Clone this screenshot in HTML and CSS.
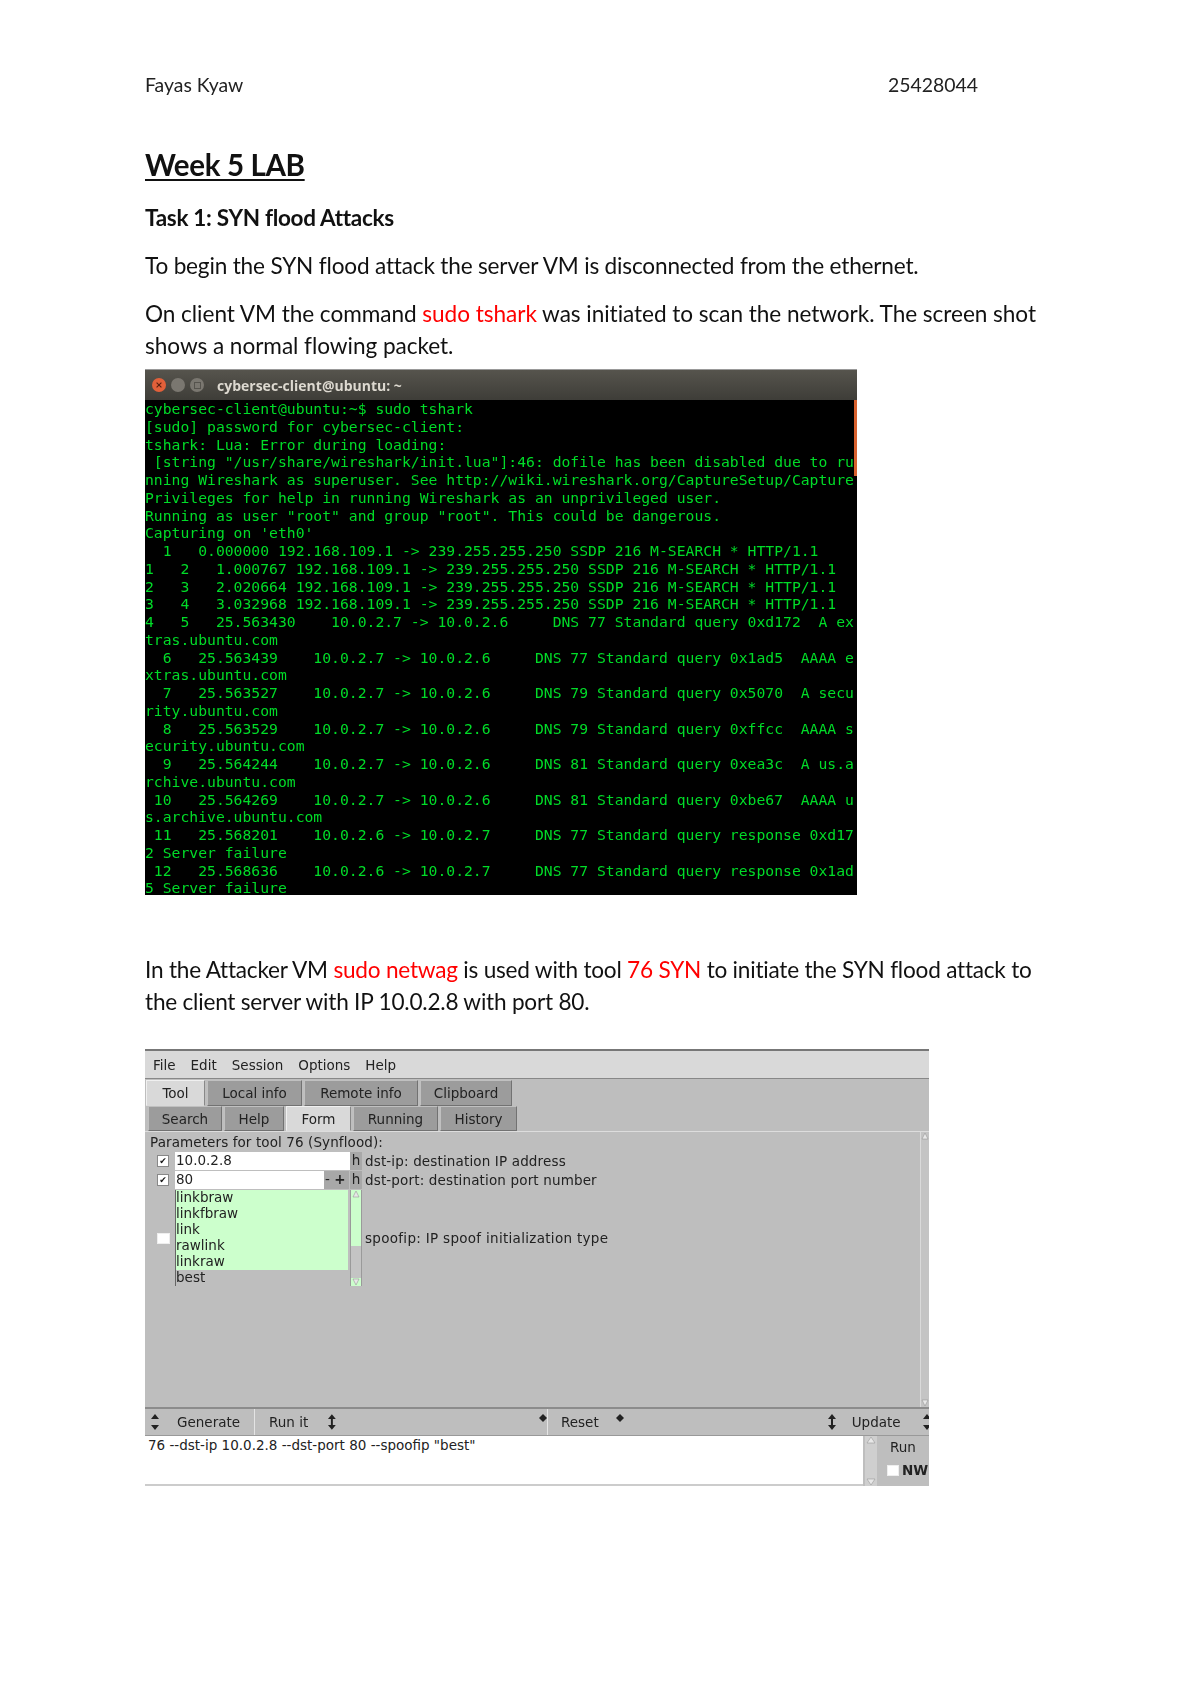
FILE: index.html
```html
<!DOCTYPE html>
<html lang="en">
<head>
<meta charset="utf-8">
<title>Week 5 LAB</title>
<link rel="stylesheet" href="styles.css">
</head>
<body>
<main class="page">
  <header class="head"><span>Fayas Kyaw</span><span>25428044</span></header>
  <h1 class="title">Week 5 LAB</h1>
  <h2 class="task">Task 1: SYN flood Attacks</h2>
  <p class="para p1">To begin the SYN flood attack the server VM is disconnected from the ethernet.</p>
  <p class="para p2">On client VM the command <span class="red">sudo tshark</span> was initiated to scan the network. The screen shot shows a normal flowing packet.</p>

  <section class="term">
    <div class="term-bar">
      <span class="dot close"><svg viewBox="0 0 10 10" width="8" height="8"><path d="M2 2l6 6M8 2l-6 6" stroke="#5a2010" stroke-width="1.4"/></svg></span>
      <span class="dot"></span>
      <span class="dot"><span class="dot-inner"></span></span>
      <span class="term-title">cybersec-client@ubuntu: ~</span>
    </div>
    <div class="term-body">
      <pre class="term-text">cybersec-client@ubuntu:~$ sudo tshark
[sudo] password for cybersec-client:
tshark: Lua: Error during loading:
 [string "/usr/share/wireshark/init.lua"]:46: dofile has been disabled due to ru
nning Wireshark as superuser. See http://wiki.wireshark.org/CaptureSetup/Capture
Privileges for help in running Wireshark as an unprivileged user.
Running as user "root" and group "root". This could be dangerous.
Capturing on 'eth0'
  1   0.000000 192.168.109.1 -> 239.255.255.250 SSDP 216 M-SEARCH * HTTP/1.1
1   2   1.000767 192.168.109.1 -> 239.255.255.250 SSDP 216 M-SEARCH * HTTP/1.1
2   3   2.020664 192.168.109.1 -> 239.255.255.250 SSDP 216 M-SEARCH * HTTP/1.1
3   4   3.032968 192.168.109.1 -> 239.255.255.250 SSDP 216 M-SEARCH * HTTP/1.1
4   5   25.563430    10.0.2.7 -> 10.0.2.6     DNS 77 Standard query 0xd172  A ex
tras.ubuntu.com
  6   25.563439    10.0.2.7 -> 10.0.2.6     DNS 77 Standard query 0x1ad5  AAAA e
xtras.ubuntu.com
  7   25.563527    10.0.2.7 -> 10.0.2.6     DNS 79 Standard query 0x5070  A secu
rity.ubuntu.com
  8   25.563529    10.0.2.7 -> 10.0.2.6     DNS 79 Standard query 0xffcc  AAAA s
ecurity.ubuntu.com
  9   25.564244    10.0.2.7 -> 10.0.2.6     DNS 81 Standard query 0xea3c  A us.a
rchive.ubuntu.com
 10   25.564269    10.0.2.7 -> 10.0.2.6     DNS 81 Standard query 0xbe67  AAAA u
s.archive.ubuntu.com
 11   25.568201    10.0.2.6 -> 10.0.2.7     DNS 77 Standard query response 0xd17
2 Server failure
 12   25.568636    10.0.2.6 -> 10.0.2.7     DNS 77 Standard query response 0x1ad
5 Server failure</pre>
      <div class="term-scroll"></div>
    </div>
  </section>

  <p class="para p3">In the Attacker VM <span class="red">sudo netwag</span> is used with tool <span class="red">76 SYN</span> to initiate the SYN flood attack to the client server with IP 10.0.2.8 with port 80.</p>

  <section class="tool">
    <nav class="menu"><span>File</span><span>Edit</span><span>Session</span><span>Options</span><span>Help</span></nav>
    <div class="tabs tabs-a">
      <span class="tab on w-tool">Tool</span>
      <span class="tab w-local">Local info</span>
      <span class="tab w-remote">Remote info</span>
      <span class="tab w-clip">Clipboard</span>
    </div>
    <div class="tabs tabs-b">
      <span class="tab w-search">Search</span>
      <span class="tab w-help">Help</span>
      <span class="tab on w-form">Form</span>
      <span class="tab w-run">Running</span>
      <span class="tab w-hist">History</span>
    </div>
    <div class="panel">
      <div class="params">
        <div class="params-label">Parameters for tool 76 (Synflood):</div>
        <div class="row">
          <span class="check"><span class="box">✔</span></span>
          <span class="input w-long">10.0.2.8</span>
          <span class="mini">h</span>
          <span class="desc">dst-ip: destination IP address</span>
        </div>
        <div class="row">
          <span class="check"><span class="box">✔</span></span>
          <span class="input w-short">80</span>
          <span class="mini narrow">-</span>
          <span class="mini plus">+</span>
          <span class="mini">h</span>
          <span class="desc">dst-port: destination port number</span>
        </div>
        <div class="row-list">
          <span class="check"><span class="box big"></span></span>
          <div class="list">
            <div class="item">linkbraw</div>
            <div class="item">linkfbraw</div>
            <div class="item">link</div>
            <div class="item">rawlink</div>
            <div class="item">linkraw</div>
            <div class="item sel">best</div>
          </div>
          <div class="list-scroll">
            <svg class="sb-arrow" viewBox="0 0 10 8" width="10" height="8"><path d="M5 1l3 6H2z" fill="#e8e8e8" stroke="#999" stroke-width=".6"/></svg>
            <span class="thumb"></span>
            <svg class="sb-arrow" viewBox="0 0 10 8" width="10" height="8"><path d="M5 7l3-6H2z" fill="#e8e8e8" stroke="#999" stroke-width=".6"/></svg>
          </div>
          <span class="desc spoof">spoofip: IP spoof initialization type</span>
        </div>
      </div>
      <div class="vscroll">
        <svg viewBox="0 0 8 8" width="8" height="8"><path d="M4 1l3 6H1z" fill="#e8e8e8" stroke="#999" stroke-width=".6"/></svg>
        <svg viewBox="0 0 8 8" width="8" height="8"><path d="M4 7l3-6H1z" fill="#e8e8e8" stroke="#999" stroke-width=".6"/></svg>
      </div>
    </div>
    <div class="actions">
      <div class="act act-gen">
        <svg class="arrows" viewBox="0 0 10 18" width="10" height="18"><path d="M5 1l4 5H1zM5 17l4-5H1z" fill="#222"/></svg>
        <span>Generate</span>
      </div>
      <div class="act act-run">
        <span>Run it</span>
        <svg class="arrows" viewBox="0 0 10 18" width="10" height="18"><path d="M5 1l4 5H1zM5 17l4-5H1z" fill="#222"/><path d="M4 5h2v8H4z" fill="#222"/></svg>
        <svg class="dia dia-a" viewBox="0 0 8 8" width="8" height="8"><path d="M4 0l4 4-4 4-4-4z" fill="#222"/></svg>
      </div>
      <div class="act act-reset">
        <span>Reset</span>
        <svg class="dia" viewBox="0 0 8 8" width="8" height="8"><path d="M4 0l4 4-4 4-4-4z" fill="#222"/></svg>
        <svg class="arrows arrows-r" viewBox="0 0 10 18" width="10" height="18"><path d="M5 1l4 5H1zM5 17l4-5H1z" fill="#222"/><path d="M4 5h2v8H4z" fill="#222"/></svg>
        <span class="upd">Update</span>
        <svg class="arrows arrows-e" viewBox="0 0 10 18" width="10" height="18"><path d="M5 1l4 5H1zM5 17l4-5H1z" fill="#222"/></svg>
      </div>
    </div>
    <div class="cmd">
      <div class="cmd-text">76 --dst-ip 10.0.2.8 --dst-port 80 --spoofip "best"</div>
      <div class="cmd-scroll">
        <svg viewBox="0 0 12 8" width="12" height="8"><path d="M6 1l4 6H2z" fill="#e8e8e8" stroke="#999" stroke-width=".6"/></svg>
        <svg viewBox="0 0 12 8" width="12" height="8"><path d="M6 7l4-6H2z" fill="#e8e8e8" stroke="#999" stroke-width=".6"/></svg>
      </div>
      <div class="cmd-side">
        <span class="cmd-run">Run</span>
        <span class="cmd-nw"><span class="box small"></span>NW</span>
      </div>
    </div>
  </section>
</main>
</body>
</html>
```
FILE: styles.css
```css
html, body { margin: 0; padding: 0; background: #fff; }
.page {
  width: 1200px; height: 1696px; box-sizing: border-box; padding: 72px 0 0 145px;
  font-family: Lato, "Open Sans", sans-serif; color: #111; overflow: hidden;
}
.head {
  width: 833px; display: flex; justify-content: space-between;
  font-size: 19.4px; line-height: 26px; filter: blur(.4px); color: #222;
}
.title {
  margin: 47px 0 0; font-size: 29.5px; line-height: 40px; font-weight: 700;
  text-decoration: underline; text-decoration-thickness: 2px; text-underline-offset: 3px;
  filter: blur(.4px); letter-spacing: -.35px;
}
.task { margin: 18px 0 0; font-size: 22.5px; line-height: 30px; font-weight: 700; filter: blur(.4px); letter-spacing: -.3px; }
.para { margin: 0; font-size: 22.6px; line-height: 32px; width: 900px; filter: blur(.4px); letter-spacing: -.05px; }
.p1 { margin-top: 17px; letter-spacing: -.18px; }
.p2 { margin-top: 16px; }
.p3 { margin-top: 59px; letter-spacing: -.22px; }
.red { color: #f00; }

.term { width: 712px; height: 526px; margin-top: 7px; background: #000; border-top: 1px solid #999; box-sizing: border-box; overflow: hidden; }
.term-bar {
  height: 30px; background: linear-gradient(#56544d, #3e3d38); display: flex; align-items: center;
  padding-left: 7px; gap: 5px; filter: blur(.5px);
}
.dot { width: 14px; height: 14px; border-radius: 50%; background: #7a7770; display: flex; align-items: center; justify-content: center; }
.dot.close { background: #e2603a; }
.dot-inner { width: 5px; height: 5px; border: 1px solid #55534d; }
.term-title { margin-left: 8px; color: #ddd9d0; font: 700 14px "Open Sans", sans-serif; }
.term-body { display: flex; justify-content: space-between; height: 496px; }
.term-text {
  margin: 0; font: 14.73px/17.75px "DejaVu Sans Mono", monospace; color: #00dc28; filter: blur(.55px);
  width: 709px; overflow: hidden; white-space: pre;
}
.term-scroll { width: 3px; height: 76px; background: #d8622f; flex: none; }

.tool { width: 784px; height: 437px; margin-top: 31px; background: #bebebe; border-top: 2px solid #777; box-sizing: border-box; overflow: hidden; font: 13.5px "DejaVu Sans", sans-serif; color: #222; display: flex; flex-direction: column; }
.tool > * { filter: blur(.5px); }
.menu { height: 27px; flex: none; background: #d9d9d9; border-bottom: 1px solid #888; display: flex; align-items: center; padding-left: 8px; gap: 15px; }
.tabs { display: flex; gap: 2px; flex: none; padding-left: 1px; }
.tabs-a { height: 26px; padding-top: 1px; }
.tabs-b { height: 25px; padding-left: 3px; }
.tab { background: #9c9c9c; border: 1px solid #727272; border-top-color: #c0c0c0; border-left-color: #c0c0c0; box-sizing: border-box; display: flex; align-items: center; justify-content: center; }
.tab.on { background: #d9d9d9; border-color: #f0f0f0 #888 #d9d9d9 #f0f0f0; }
.w-tool { width: 59px; } .w-local { width: 95px; } .w-remote { width: 114px; } .w-clip { width: 92px; }
.w-search { width: 74px; } .w-help { width: 60px; } .w-form { width: 65px; } .w-run { width: 85px; } .w-hist { width: 77px; }

.panel { height: 276px; flex: none; display: flex; border-top: 1px solid #ddd; box-sizing: border-box; }
.params { flex: 1; padding: 2px 0 0 5px; }
.params-label { height: 18px; line-height: 17px; letter-spacing: .1px; }
.row { display: flex; align-items: center; height: 18px; margin-bottom: 1px; }
.check { width: 25px; display: flex; justify-content: center; flex: none; padding-left: 1px; box-sizing: border-box; }
.box { width: 10px; height: 10px; background: #fff; border: 1px solid #888; font-size: 9px; line-height: 10px; text-align: center; color: #111; display: block; }
.box.big { width: 11px; height: 9px; border-color: #eee; }
.input { height: 18px; background: #fff; line-height: 17px; padding-left: 1px; box-sizing: border-box; flex: none; }
.w-long { width: 175px; } .w-short { width: 149px; }
.mini { width: 12px; height: 18px; background: #a8a8a8; text-align: center; line-height: 16px; flex: none; }
.mini.narrow { width: 7px; }
.mini.plus { width: 18px; font-weight: 700; margin-right: 1px; }
.desc { margin-left: 3px; white-space: nowrap; letter-spacing: .15px; }
.row-list { display: flex; align-items: stretch; height: 96px; margin-top: 1px; }
.row-list .check, .row-list .spoof { align-self: center; }
.list { width: 173px; flex: none; background: #ccffcc; border-left: 1px solid #666; box-sizing: border-box; }
.item { height: 16px; line-height: 15px; }
.item.sel { background: #bebebe; }
.list-scroll { width: 12px; margin-left: 2px; background: #ccffcc; flex: none; display: flex; flex-direction: column; justify-content: space-between; align-items: center; box-sizing: border-box; border: 1px solid #9a9a9a; border-width: 0 1px; }
.sb-arrow { flex: none; }
.thumb { width: 100%; height: 32px; margin-top: auto; background: #c4c4c4; }
.spoof { margin-left: 3px; letter-spacing: .3px; }
.vscroll { width: 8px; flex: none; border-left: 1px solid #dadada; background: #c4c4c4; display: flex; flex-direction: column; justify-content: space-between; }

.actions { height: 26px; flex: none; display: flex; border-top: 2px solid #8c8c8c; border-bottom: 1px solid #999; }
.act { display: flex; align-items: center; flex: none; border-right: 1px solid #e4e4e4; box-sizing: border-box; white-space: nowrap; }
.act-gen { width: 110px; padding-left: 5px; gap: 17px; }
.act-run { width: 293px; padding-left: 14px; gap: 19px; }
.dia-a { margin-left: 183px; margin-top: -8px; flex: none; }
.act-reset { flex: 1; padding-left: 13px; gap: 12px; border-right: 0; }
.act-reset .dia { margin-top: -8px; margin-left: 5px; }
.arrows-r { margin-left: 191px; }
.upd { margin-left: 3px; }
.arrows-e { margin-left: 9px; }

.cmd { flex: 1; display: flex; min-height: 0; }
.cmd-text { width: 718px; flex: none; background: #fff; padding: 1px 0 0 3px; box-sizing: border-box; white-space: nowrap; border-bottom: 2px solid #ccc; }
.cmd-scroll { width: 12px; margin-left: 2px; flex: none; background: #cfcfcf; display: flex; flex-direction: column; justify-content: space-between; }
.cmd-side { flex: 1; display: flex; flex-direction: column; padding: 3px 0 0 10px; gap: 7px; background: #bebebe; overflow: hidden; }
.cmd-run { padding-left: 3px; }
.cmd-nw { display: flex; align-items: center; gap: 3px; font-weight: 700; white-space: nowrap; }
.box.small { width: 10px; height: 9px; border-color: #eee; }
```
